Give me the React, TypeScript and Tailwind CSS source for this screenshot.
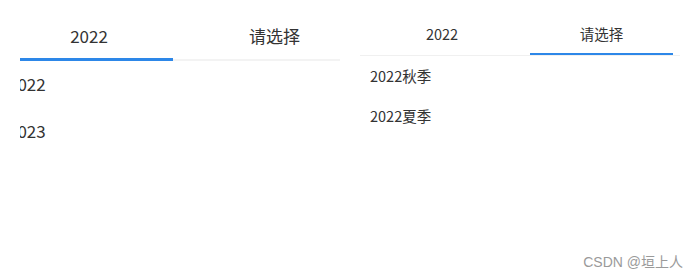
const FONT = "font-['Noto_Sans_CJK_SC','Noto_Sans',sans-serif]";

function LeftPanel() {
  const years = ["2022", "2023"];
  return (
    <div className="ml-[20px] w-[320px]">
      <div className="flex pt-[24px] pb-[10px] text-[17px] leading-[24px] text-[#333]">
        <div className="flex w-[153px] justify-center pr-[15px]">2022</div>
        <div className="flex-1 pl-[76px]">请选择</div>
      </div>
      <div className="flex h-[3px] items-end">
        <div className="h-[3px] w-[153px] bg-[#2d87e8]" />
        <div className="h-[2px] flex-1 bg-[#f3f3f3]" />
      </div>
      <ul className="mt-[11px] flex flex-col gap-[23px] overflow-hidden text-[17px] leading-[24px] text-[#333]">
        {years.map((y) => (
          <li key={y} className="-ml-[12px]">
            {y}
          </li>
        ))}
      </ul>
    </div>
  );
}

function RightPanel() {
  const seasons = ["2022秋季", "2022夏季"];
  return (
    <div className="ml-[20px] w-[320px]">
      <div className="flex border-b border-[#f0f0f0] pt-[23px] text-[14.5px] leading-[22px] text-[#333]">
        <div className="flex w-[170px] flex-col">
          <span className="pr-[6px] text-center">2022</span>
          <div className="mt-[8px] h-[2px]" />
        </div>
        <div className="flex w-[143px] flex-col">
          <span className="text-center">请选择</span>
          <div className="mt-[8px] h-[2px] bg-[#2d87e8]" />
        </div>
      </div>
      <ul className="mt-[9px] flex flex-col gap-[18px] pl-[10px] text-[14.5px] leading-[22px] text-[#333]">
        {seasons.map((s) => (
          <li key={s}>{s}</li>
        ))}
      </ul>
    </div>
  );
}

export default function App() {
  return (
    <div className={`flex h-[280px] w-[700px] flex-col bg-white ${FONT}`}>
      <div className="flex">
        <LeftPanel />
        <RightPanel />
      </div>
      <div className="mt-auto pb-[9px] pr-[17px] text-right font-['Liberation_Sans','Noto_Sans_CJK_SC',sans-serif] text-[14px] leading-[18px] text-[#9a9a9a]">
        CSDN @垣上人
      </div>
    </div>
  );
}
